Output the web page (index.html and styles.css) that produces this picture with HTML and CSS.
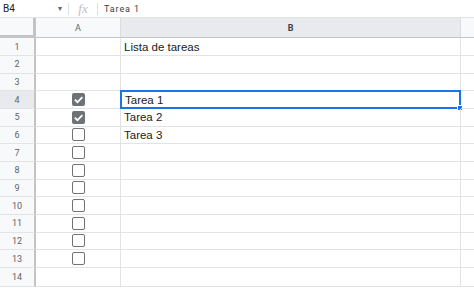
FILE: index.html
```html
<!DOCTYPE html>
<html>
<head>
<meta charset="utf-8">
<link rel="stylesheet" href="styles.css">
</head>
<body>
<div class="fbar">
  <div class="namebox">B4</div>
  <div class="arrow">▾</div>
  <div class="sep"></div>
  <div class="fx">fx</div>
  <div class="sep"></div>
  <div class="formula">Tarea 1</div>
</div>
<div class="sheet">
  <div class="corner"></div>
  <div class="colh">A</div>
  <div class="colh sel">B</div>
  <div class="colh rest"></div>

  <div class="rowh">1</div><div class="cell"></div><div class="cell b">Lista de tareas</div><div class="cell c"></div>
  <div class="rowh">2</div><div class="cell"></div><div class="cell b"></div><div class="cell c"></div>
  <div class="rowh">3</div><div class="cell"></div><div class="cell b"></div><div class="cell c"></div>
  <div class="rowh sel">4</div><div class="cell"><span class="cb on"><svg viewBox="0 0 12 12"><path d="M2.6 6.2 L5 8.5 L9.6 3.8" fill="none" stroke="#fff" stroke-width="1.6"/></svg></span></div><div class="cell b active">Tarea 1<span class="handle"></span></div><div class="cell c"></div>
  <div class="rowh">5</div><div class="cell"><span class="cb on"><svg viewBox="0 0 12 12"><path d="M2.6 6.2 L5 8.5 L9.6 3.8" fill="none" stroke="#fff" stroke-width="1.6"/></svg></span></div><div class="cell b">Tarea 2</div><div class="cell c"></div>
  <div class="rowh">6</div><div class="cell"><span class="cb"></span></div><div class="cell b">Tarea 3</div><div class="cell c"></div>
  <div class="rowh">7</div><div class="cell"><span class="cb"></span></div><div class="cell b"></div><div class="cell c"></div>
  <div class="rowh">8</div><div class="cell"><span class="cb"></span></div><div class="cell b"></div><div class="cell c"></div>
  <div class="rowh">9</div><div class="cell"><span class="cb"></span></div><div class="cell b"></div><div class="cell c"></div>
  <div class="rowh">10</div><div class="cell"><span class="cb"></span></div><div class="cell b"></div><div class="cell c"></div>
  <div class="rowh">11</div><div class="cell"><span class="cb"></span></div><div class="cell b"></div><div class="cell c"></div>
  <div class="rowh">12</div><div class="cell"><span class="cb"></span></div><div class="cell b"></div><div class="cell c"></div>
  <div class="rowh">13</div><div class="cell"><span class="cb"></span></div><div class="cell b"></div><div class="cell c"></div>
  <div class="rowh">14</div><div class="cell"></div><div class="cell b"></div><div class="cell c"></div>
</div>
</body>
</html>
```

FILE: styles.css
```css
html, body {
  margin: 0;
  padding: 0;
  background: #fff;
  overflow: hidden;
}
body {
  width: 474px;
  height: 288px;
  font-family: "Liberation Sans", Arial, sans-serif;
}
.fbar {
  height: 17px;
  border-bottom: 1px solid #e3e3e3;
  display: flex;
  align-items: center;
  font-family: Roboto, "Liberation Sans", sans-serif;
}
.namebox {
  width: 55px;
  padding-left: 3px;
  font-size: 10px;
  color: #202124;
}
.arrow {
  width: 10px;
  font-size: 8px;
  color: #5f6368;
}
.sep {
  width: 1px;
  height: 12px;
  background: #e0e0e0;
}
.fx {
  width: 28px;
  text-align: center;
  font-family: "Liberation Serif", serif;
  font-style: italic;
  font-size: 13px;
  color: #bdc1c6;
}
.formula {
  padding-left: 6px;
  font-size: 9px;
  letter-spacing: 0.9px;
  color: #3c4043;
}
.sheet {
  display: grid;
  grid-template-columns: 36px 85px 340px 13px;
  grid-template-rows: 20.3px repeat(13, 17.67px) 19px;
}
.corner {
  background: #f8f9fa;
  border-right: 3px solid #c4c4c4;
  border-bottom: 3px solid #c4c4c4;
  box-sizing: border-box;
}
.colh {
  background: #f8f9fa;
  border-right: 1px solid #dadcdf;
  border-bottom: 1px solid #c4c4c4;
  box-sizing: border-box;
  font-family: Roboto, sans-serif;
  font-size: 9px;
  color: #5f6368;
  display: flex;
  align-items: center;
  justify-content: center;
}
.colh.sel {
  background: #e8eaed;
  color: #3c4043;
  font-weight: bold;
}
.colh.rest {
  border-right: none;
}
.rowh {
  background: #f8f9fa;
  border-right: 2px solid #c4c4c4;
  border-bottom: 1px solid #e2e3e3;
  box-sizing: border-box;
  font-family: Roboto, sans-serif;
  font-size: 9px;
  color: #5f6368;
  display: flex;
  align-items: center;
  justify-content: center;
}
.rowh.sel {
  background: #e8eaed;
}
.cell {
  border-right: 1px solid #e2e3e3;
  border-bottom: 1px solid #e2e3e3;
  box-sizing: border-box;
  display: flex;
  align-items: center;
  justify-content: center;
  font-size: 11.5px;
  color: #202124;
  position: relative;
}
.cell.b {
  justify-content: flex-start;
  padding-left: 3px;
}
.cell.c {
  border-right: none;
}
.cell.active {
  border: 2px solid #1a73e8;
  margin: -1px 0 0 -1px;
  padding-left: 3px;
}
.handle {
  position: absolute;
  right: -4px;
  bottom: -4px;
  width: 6px;
  height: 6px;
  background: #1a73e8;
  border: 1px solid #fff;
  box-sizing: border-box;
}
.cb {
  width: 13px;
  height: 13px;
  box-sizing: border-box;
  border: 1.7px solid #6f7276;
  border-radius: 2px;
  display: block;
}
.cb.on {
  background: #6f7276;
  border: none;
}
.cb svg {
  display: block;
  width: 13px;
  height: 13px;
}
```
